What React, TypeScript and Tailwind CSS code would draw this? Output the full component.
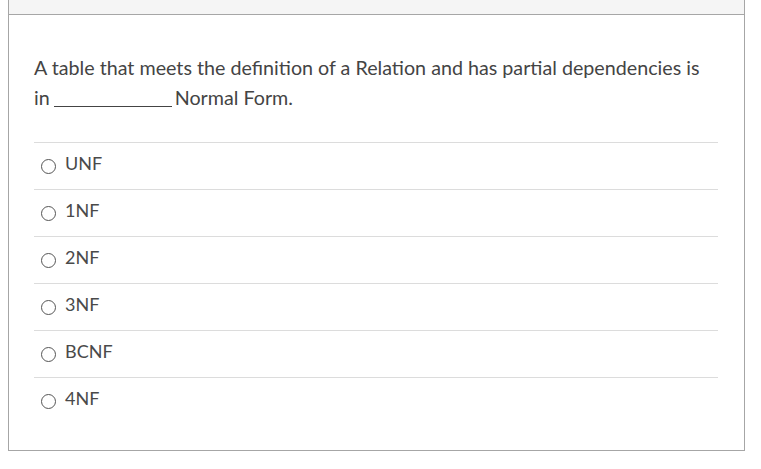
import React from "react";

const options = ["UNF", "1NF", "2NF", "3NF", "BCNF", "4NF"];

export default function App() {
  return (
    <div className="w-[761px] h-[469px] bg-white" style={{ fontFamily: "Lato, 'Liberation Sans', sans-serif" }}>
      <div className="ml-[8px] w-[737px] h-[451px] border-x border-b border-[#a6a6a6] flex flex-col">
        <div className="h-[15px] bg-[#f5f5f5] border-b border-[#a6a6a6]" />
        <div className="pl-[25px] pr-[26px] pt-[38px]">
          <p className="text-[19.7px] leading-[30px] text-[#444444]">
            A table that meets the definition of a Relation and has partial dependencies is
            <br />
            in<span className="inline-block w-[118px] h-[1px] border-b border-[#444444] ml-[4px] mr-[3px] translate-y-[2px]" />Normal Form.
          </p>
          <div className="mt-[29px]">
            {options.map((o) => (
              <div key={o} className="h-[47px] border-t border-[#dcdcdc] flex items-center pl-[7px]">
                <span className="w-[15px] h-[15px] rounded-full border border-[#555555] mr-[9px]" />
                <span className="text-[18px] text-[#4a4a4a] -translate-y-[3px]">{o}</span>
              </div>
            ))}
          </div>
        </div>
      </div>
    </div>
  );
}
